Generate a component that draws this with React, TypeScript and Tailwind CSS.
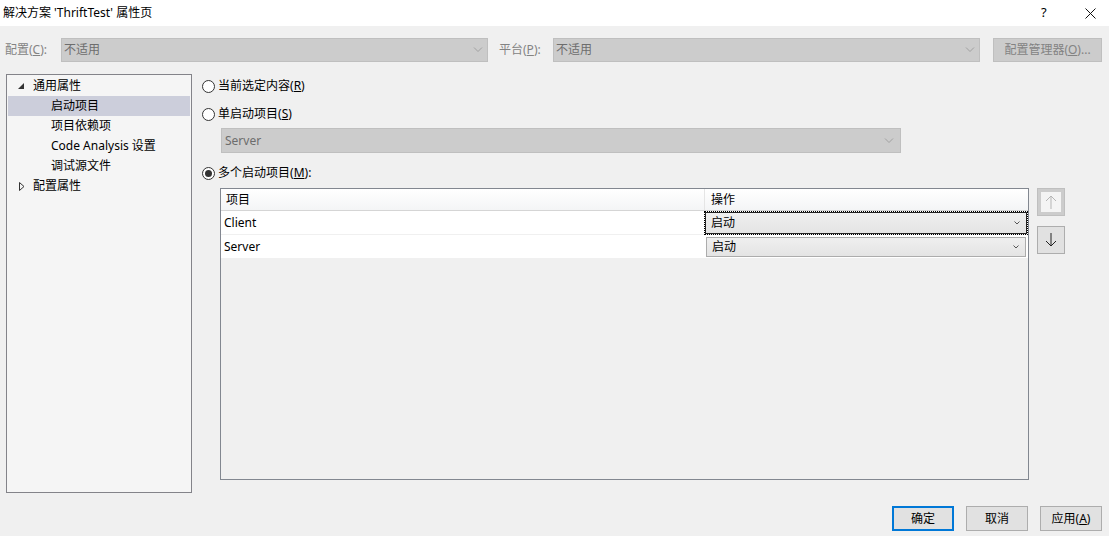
import React from 'react';

const font = "font-['Noto_Sans','Noto_Sans_CJK_SC',sans-serif]";

function Chevron({ className = '' }: { className?: string }) {
  return (
    <svg width="10" height="6" viewBox="0 0 10 6" className={className} fill="none" stroke="currentColor" strokeWidth="1">
      <path d="M1 0.5l4 4 4-4" />
    </svg>
  );
}

function Radio({ checked, label, k, suffix = '' }: { checked?: boolean; label: string; k: string; suffix?: string }) {
  return (
    <div className="flex items-center h-[18px]">
      <span className="w-[13px] h-[13px] rounded-full border border-[#333] bg-white flex items-center justify-center">
        {checked && <span className="w-[7px] h-[7px] rounded-full bg-[#333]" />}
      </span>
      <span className="ml-[3px] text-[12px] text-black">
        {label}(<span className="underline">{k}</span>){suffix}
      </span>
    </div>
  );
}

function DisabledCombo({ text, width }: { text: string; width: string }) {
  return (
    <div className={`${width} h-[24px] bg-[#cccccc] border border-[#bfbfbf] flex items-center pl-[2px] pr-[4px] text-[12px] text-[#6d6d6d]`}>
      <span className="flex-1">{text}</span>
      <Chevron className="text-[#a0a0a0]" />
    </div>
  );
}

function CellCombo({ focused }: { focused?: boolean }) {
  return (
    <div className={`h-[22px] ${focused ? 'outline outline-1 outline-dotted outline-black' : 'px-[1px] py-[1px]'}`}>
      <div
        className={`h-full flex items-center pl-[5px] pr-[6px] text-[12px] bg-gradient-to-b from-[#efefef] to-[#e4e4e4] border ${
          focused ? 'border-[#222]' : 'border-[#acacac]'
        }`}
      >
        <span className="flex-1">启动</span>
        <svg width="6" height="4" viewBox="0 0 6 4" fill="none" stroke="#555" strokeWidth="1">
          <path d="M0.5 0.5l2.5 2.5 2.5-2.5" />
        </svg>
      </div>
    </div>
  );
}

export default function App() {
  const tree = [
    { label: '启动项目', sel: true },
    { label: '项目依赖项' },
    { label: 'Code Analysis 设置' },
    { label: '调试源文件' },
  ];

  return (
    <div className={`${font} w-[1109px] h-[536px] bg-[#f0f0f0] flex flex-col text-black overflow-hidden`}>
      {/* title bar */}
      <div className="h-[26px] bg-white flex items-center shrink-0">
        <span className="pl-[3px] text-[12px] flex-1">解决方案 'ThriftTest' 属性页</span>
        <span className="text-[13px] w-[14px] mr-[30px]">?</span>
        <svg width="11" height="11" viewBox="0 0 11 11" className="mr-[13px]" stroke="#111" strokeWidth="1">
          <path d="M0.5 0.5l10 10M10.5 0.5l-10 10" />
        </svg>
      </div>

      {/* config row */}
      <div className="flex items-center mt-[12px] h-[24px] pl-[5px] text-[12px] shrink-0">
        <span className="w-[56px] text-[#838383]">
          配置(<span className="underline">C</span>):
        </span>
        <DisabledCombo text="不适用" width="w-[427px]" />
        <span className="ml-[11px] w-[54px] text-[#838383]">
          平台(<span className="underline">P</span>):
        </span>
        <DisabledCombo text="不适用" width="w-[427px]" />
        <div className="ml-[13px] w-[109px] h-[24px] bg-[#cccccc] border border-[#bfbfbf] flex items-center justify-center text-[#838383]">
          配置管理器(<span className="underline">O</span>)...
        </div>
      </div>

      {/* main */}
      <div className="flex mt-[12px] pl-[6px] h-[419px] shrink-0">
        <div className="w-[186px] h-full bg-[#f5f5f5] border border-[#838389] pt-px px-px text-[12px]">
          <div className="h-[20px] flex items-center">
            <svg width="6" height="6" viewBox="0 0 6 6" className="ml-[10px]" fill="#333">
              <path d="M6 0V6H0z" />
            </svg>
            <span className="ml-[9px]">通用属性</span>
          </div>
          {tree.map((t) => (
            <div key={t.label} className={`h-[20px] flex items-center pl-[43px] ${t.sel ? 'bg-[#cccedb]' : ''}`}>
              {t.label}
            </div>
          ))}
          <div className="h-[20px] flex items-center">
            <svg width="6" height="9" viewBox="0 0 6 9" className="ml-[11px]" fill="none" stroke="#333" strokeWidth="1">
              <path d="M0.5 0.5L5 4.5 0.5 8.5z" />
            </svg>
            <span className="ml-[8px]">配置属性</span>
          </div>
        </div>

        <div className="flex flex-col ml-[10px] pt-[3px]">
          <Radio label="当前选定内容" k="R" />
          <div className="mt-[10px]">
            <Radio label="单启动项目" k="S" />
          </div>
          <div className="ml-[19px] mt-[5px] w-[680px] h-[25px] bg-[#cccccc] border border-[#bfbfbf] flex items-center pl-[3px] pr-[6px] text-[12px] text-[#6d6d6d]">
            <span className="flex-1">Server</span>
            <Chevron className="text-[#a0a0a0]" />
          </div>
          <div className="mt-[11px]">
            <Radio checked label="多个启动项目" k="M" suffix=":" />
          </div>

          <div className="flex mt-[6px]">
            <div className="ml-[18px] w-[809px] h-[292px] border border-[#828790] bg-[#f0f0f0] flex flex-col text-[12px]">
              <div className="h-[22px] flex bg-gradient-to-b from-white to-[#f4f5f6] border-b border-[#d5d5d5]">
                <div className="w-[484px] pl-[5px] flex items-center border-r border-[#e5e5e5]">项目</div>
                <div className="flex-1 pl-[6px] flex items-center">操作</div>
              </div>
              {['Client', 'Server'].map((n, i) => (
                <div key={n} className="h-[24px] flex bg-white border-b border-[#f0f0f0]">
                  <div className="w-[484px] pl-[3px] flex items-center">{n}</div>
                  <div className="w-[322px] pt-[1px]">
                    <CellCombo focused={i === 0} />
                  </div>
                </div>
              ))}
            </div>

            <div className="ml-[8px] flex flex-col">
              <div className="w-[28px] h-[28px] bg-[#cccccc] border border-[#bfbfbf] flex items-center justify-center">
                <div className="w-[20px] h-[20px] bg-[#f4f4f4] flex items-center justify-center">
                  <svg width="12" height="14" viewBox="0 0 12 14" fill="none" stroke="#b5b5b5" strokeWidth="1">
                    <path d="M6 14V1M1 6l5-5 5 5" />
                  </svg>
                </div>
              </div>
              <div className="mt-[10px] w-[28px] h-[28px] bg-[#e1e1e1] border border-[#adadad] flex items-center justify-center">
                <svg width="12" height="14" viewBox="0 0 12 14" fill="none" stroke="#222" strokeWidth="1">
                  <path d="M6 0v13M1 8l5 5 5-5" />
                </svg>
              </div>
            </div>
          </div>
        </div>
      </div>

      {/* bottom buttons */}
      <div className="flex justify-end mt-[13px] pr-[7px] text-[12px]">
        <div className="w-[62px] h-[25px] bg-[#e1e1e1] border-2 border-[#0078d7] flex items-center justify-center">确定</div>
        <div className="ml-[12px] w-[62px] h-[25px] bg-[#e1e1e1] border border-[#adadad] flex items-center justify-center">取消</div>
        <div className="ml-[12px] w-[62px] h-[25px] bg-[#e1e1e1] border border-[#adadad] flex items-center justify-center">
          应用(<span className="underline">A</span>)
        </div>
      </div>
    </div>
  );
}
